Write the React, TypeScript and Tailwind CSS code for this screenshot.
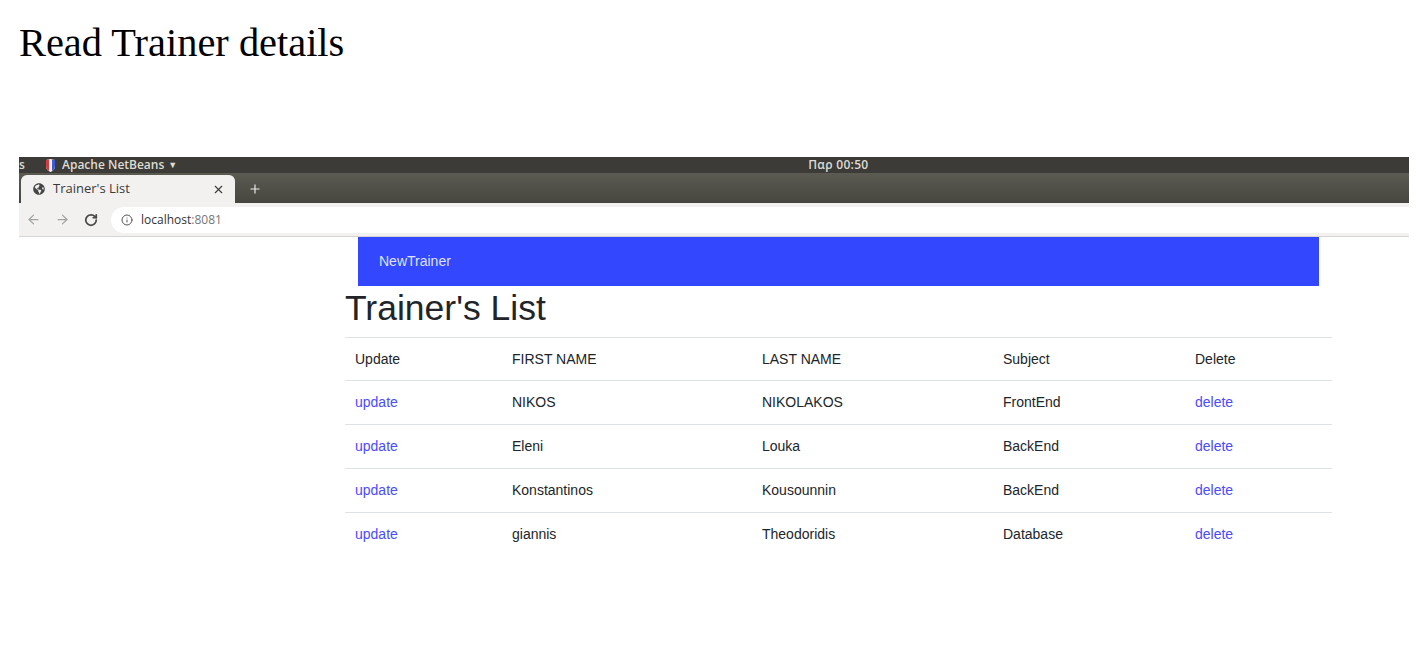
import { ArrowLeft, ArrowRight, RotateCw, Info, X, Plus } from 'lucide-react';
import { FaGlobeAmericas } from 'react-icons/fa';

const trainers = [
  { first: 'NIKOS', last: 'NIKOLAKOS', subject: 'FrontEnd' },
  { first: 'Eleni', last: 'Louka', subject: 'BackEnd' },
  { first: 'Konstantinos', last: 'Kousounnin', subject: 'BackEnd' },
  { first: 'giannis', last: 'Theodoridis', subject: 'Database' },
];

const NetBeansIcon = () => (
  <svg width="11" height="13" viewBox="0 0 11 13">
    <path d="M1 1 L5.5 0 L10 1 L10 7 Q10 11 5.5 13 Q1 11 1 7 Z" fill="#f4f4f4" />
    <path d="M1 1 L4 0.4 L4 12 Q1 10.5 1 7 Z" fill="#d93a3a" />
    <path d="M7 0.4 L10 1 L10 7 Q10 10.5 7 12 Z" fill="#3b5bd6" />
  </svg>
);

const BrowserChrome = () => (
  <div className="w-[1390px]">
    {/* system top bar */}
    <div className="h-[16px] bg-[#3c3b37] flex items-center text-[#dfdbd2] font-['Open_Sans',sans-serif] font-semibold text-[12px] leading-[16px]">
      <span className="w-[26px]">s</span>
      <NetBeansIcon />
      <span className="ml-[6px]">Apache NetBeans</span>
      <span className="ml-[4px] text-[9px]">▼</span>
      <span className="ml-[631px] tracking-[0.3px]">Παρ 00:50</span>
    </div>
    {/* tab strip */}
    <div className="h-[30px] bg-gradient-to-b from-[#5c5b52] to-[#46453f] flex items-end">
      <div className="ml-[2px] w-[214px] h-[28px] rounded-t-[6px] bg-[#f2f1f0] flex items-center pl-[12px] pr-[10px] font-['Open_Sans',sans-serif] text-[13px] text-[#3a3a3a]">
        <FaGlobeAmericas className="text-[#454545] text-[12px]" />
        <span className="ml-[8px] flex-1">Trainer's List</span>
        <X className="w-[13px] h-[13px] text-[#3a3a3a]" strokeWidth={2} />
      </div>
      <div className="h-[28px] flex items-center ml-[13px]">
        <Plus className="w-[14px] h-[14px] text-[#ececec]" strokeWidth={2} />
      </div>
    </div>
    {/* toolbar */}
    <div className="h-[34px] bg-[#f2f1f0] flex items-center border-b border-[#d6d5d3]">
      <ArrowLeft className="ml-[7px] w-[15px] h-[15px] text-[#a3a3a3]" strokeWidth={2} />
      <ArrowRight className="ml-[14px] w-[15px] h-[15px] text-[#a3a3a3]" strokeWidth={2} />
      <RotateCw className="ml-[14px] w-[14px] h-[14px] text-[#4a4a4a]" strokeWidth={3} />
      <div className="ml-[13px] flex-1 h-[26px] bg-white rounded-l-full flex items-center pl-[10px] font-['Open_Sans',sans-serif] text-[12px]">
        <Info className="w-[12px] h-[12px] text-[#555]" strokeWidth={2} />
        <span className="ml-[8px] text-[#333]">localhost</span>
        <span className="text-[#777]">:8081</span>
      </div>
    </div>
    {/* page */}
    <div className="bg-white pl-[326px] font-['Liberation_Sans',Arial,sans-serif] text-[#212529]">
      <div className="w-[987px]">
        <nav className="mx-[13px] h-[49px] bg-[#3347ff] flex items-center pl-[21px] text-[14px] text-[#dfe3ff]">
          NewTrainer
        </nav>
        <h1 className="mt-[1px] mb-[8px] text-[35.5px] leading-[42px]">Trainer's List</h1>
        <table className="w-full text-[14px] border-collapse">
          <thead>
            <tr className="border-t border-b border-[#dee2e6] h-[43px]">
              <th className="w-[157px] text-left font-normal px-[10px]">Update</th>
              <th className="w-[250px] text-left font-normal px-[10px]">FIRST NAME</th>
              <th className="w-[241px] text-left font-normal px-[10px]">LAST NAME</th>
              <th className="w-[192px] text-left font-normal px-[10px]">Subject</th>
              <th className="text-left font-normal px-[10px]">Delete</th>
            </tr>
          </thead>
          <tbody>
            {trainers.map((t, i) => (
              <tr key={i} className={i < trainers.length - 1 ? 'border-b border-[#dee2e6] h-[44px]' : 'h-[44px]'}>
                <td className="px-[10px] text-[#4b4bff]">update</td>
                <td className="px-[10px]">{t.first}</td>
                <td className="px-[10px]">{t.last}</td>
                <td className="px-[10px]">{t.subject}</td>
                <td className="px-[10px] text-[#4b4bff]">delete</td>
              </tr>
            ))}
          </tbody>
        </table>
      </div>
    </div>
  </div>
);

export default function App() {
  return (
    <div className="h-[660px] bg-white font-['Liberation_Serif','Times_New_Roman',serif] text-black overflow-hidden">
      <h1 className="pt-[20px] pl-[19px] text-[40.4px] leading-[46px]">Read Trainer details</h1>
      <div className="mt-[91px] ml-[19px]">
        <BrowserChrome />
      </div>
    </div>
  );
}
